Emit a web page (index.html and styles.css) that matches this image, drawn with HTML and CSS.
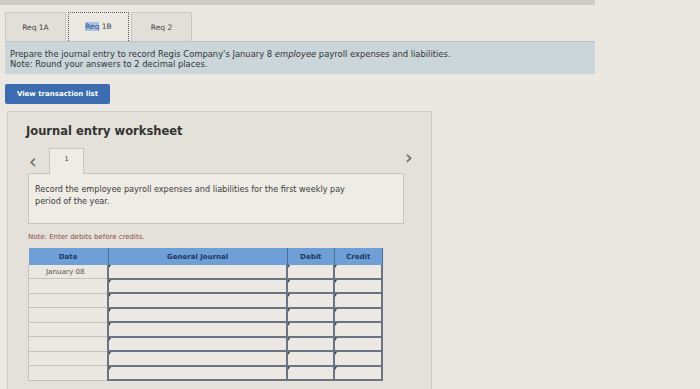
FILE: index.html
```html
<!DOCTYPE html>
<html>
  <head>
    <title>Journal entry worksheet</title>
    <link rel="stylesheet" href="styles.css">
  </head>
  <body>
    <div class="topbar"></div>
    <div class="tabs">
      <div class="tab">Req 1A</div>
      <div class="tab active"><span class="sel">Req</span> 1B</div>
      <div class="tab">Req 2</div>
    </div>
    <div class="info">
      Prepare the journal entry to record Regis Company's January 8 <em>employee</em> payroll expenses and liabilities.<br>
      Note: Round your answers to 2 decimal places.
    </div>
    <div class="btn">View transaction list</div>

    <div class="panel">
      <h1>Journal entry worksheet</h1>
      <div class="nav">
        <span class="arrow">&lsaquo;</span>
        <div class="step">1</div>
        <span class="arrow right">&rsaquo;</span>
      </div>
      <div class="record">
        Record the employee payroll expenses and liabilities for the first weekly pay<br>
        period of the year.
      </div>
      <div class="note">Note: Enter debits before credits.</div>
      <table class="journal">
        <tr>
          <th class="c-date">Date</th>
          <th class="c-gj">General Journal</th>
          <th class="c-num">Debit</th>
          <th class="c-num">Credit</th>
        </tr>
        <tr><td class="date">January 08</td><td class="in"></td><td class="in"></td><td class="in"></td></tr>
        <tr><td class="date"></td><td class="in"></td><td class="in"></td><td class="in"></td></tr>
        <tr><td class="date"></td><td class="in"></td><td class="in"></td><td class="in"></td></tr>
        <tr><td class="date"></td><td class="in"></td><td class="in"></td><td class="in"></td></tr>
        <tr><td class="date"></td><td class="in"></td><td class="in"></td><td class="in"></td></tr>
        <tr><td class="date"></td><td class="in"></td><td class="in"></td><td class="in"></td></tr>
        <tr><td class="date"></td><td class="in"></td><td class="in"></td><td class="in"></td></tr>
        <tr><td class="date"></td><td class="in"></td><td class="in"></td><td class="in"></td></tr>
      </table>
    </div>
  </body>
</html>
```

FILE: styles.css
```css
body {
  margin: 0;
  background-color: #ebe8e2;
  font-family: "DejaVu Sans", Verdana, sans-serif;
  color: #3c3c3c;
  overflow: hidden;
  height: 389px;
}

.topbar {
  width: 595px;
  height: 5px;
  background-color: #cfccc5;
}

.tabs {
  display: flex;
  gap: 2px;
  margin: 7px 0 0 5px;
  height: 29px;
}

.tab {
  width: 59px;
  border: solid 1px #cbc8c1;
  border-bottom: none;
  background-color: #e2dfd8;
  font-size: 7.5px;
  line-height: 29px;
  text-align: center;
  color: #444;
}

.tab.active {
  width: 59px;
  background-color: #ece9e3;
  border: dotted 1px #555;
  border-bottom: none;
  line-height: 27px;
}

.sel {
  background-color: #a9c4e6;
  color: #2c4f86;
}

.info {
  width: 580px;
  margin-left: 5px;
  padding: 7px 5px 5px 5px;
  background-color: #cbd6da;
  border-top: solid 1px #b9c4c8;
  font-size: 8.4px;
  line-height: 10px;
  color: #333;
}

.btn {
  display: inline-block;
  margin: 10px 0 0 5px;
  width: 105px;
  height: 20px;
  line-height: 20px;
  text-align: center;
  background-color: #3b6cb2;
  border-radius: 2px;
  color: #fff;
  font-size: 7px;
  font-weight: bold;
}

.panel {
  margin: 7px 0 0 7px;
  width: 405px;
  height: 290px;
  padding: 12px 0 0 18px;
  background-color: #e4e1da;
  border: solid 1px #cfccc5;
}

h1 {
  margin: 0;
  font-size: 11.5px;
  font-weight: bold;
  color: #333;
  height: 24px;
}

.nav {
  display: flex;
  align-items: flex-end;
  height: 25px;
  position: relative;
}

.arrow {
  font-size: 19px;
  color: #666;
  width: 20px;
  padding-left: 3px;
  line-height: 18px;
  align-self: center;
}

.arrow.right {
  position: absolute;
  left: 376px;
  top: 0;
}

.step {
  width: 33px;
  height: 25px;
  margin-bottom: -1px;
  border: solid 1px #c8c5be;
  border-bottom: none;
  background-color: #efece6;
  font-size: 6.5px;
  text-align: center;
  line-height: 20px;
  position: relative;
  z-index: 1;
}

.record {
  width: 368px;
  height: 40px;
  margin-left: 2px;
  padding: 9px 0 0 6px;
  border: solid 1px #c8c5be;
  background-color: #efece6;
  font-size: 8.1px;
  line-height: 12px;
  color: #3a3a3a;
}

.note {
  margin: 9px 0 0 2px;
  font-size: 7px;
  color: #8a4a42;
}

.journal {
  margin: 7px 0 0 2px;
  border-collapse: collapse;
  width: 355px;
}

.journal th {
  height: 17px;
  background-color: #6e9fd7;
  color: #21365e;
  font-size: 7px;
  font-weight: bold;
  border-right: solid 1px #4e6f96;
  padding: 0;
}

.c-date { width: 80px; }
.c-gj { width: 181px; }
.c-num { width: 47px; }

.journal td {
  height: 12.5px;
  padding: 0;
}

.journal td.date {
  border-bottom: solid 1px #c5c2bb;
  border-left: solid 1px #c5c2bb;
  background-color: #ebe8e2;
  font-size: 7.2px;
  text-align: left;
  padding-left: 17px;
  color: #555;
  vertical-align: middle;
}

.journal td.in {
  border: solid 2px #6b7480;
  border-top: none;
  background-color: #ece9e4;
  position: relative;
}

.journal td.in::before {
  content: "";
  position: absolute;
  left: 0;
  top: 0;
  border-top: solid 3px #3a4350;
  border-right: solid 2px transparent;
}
```
